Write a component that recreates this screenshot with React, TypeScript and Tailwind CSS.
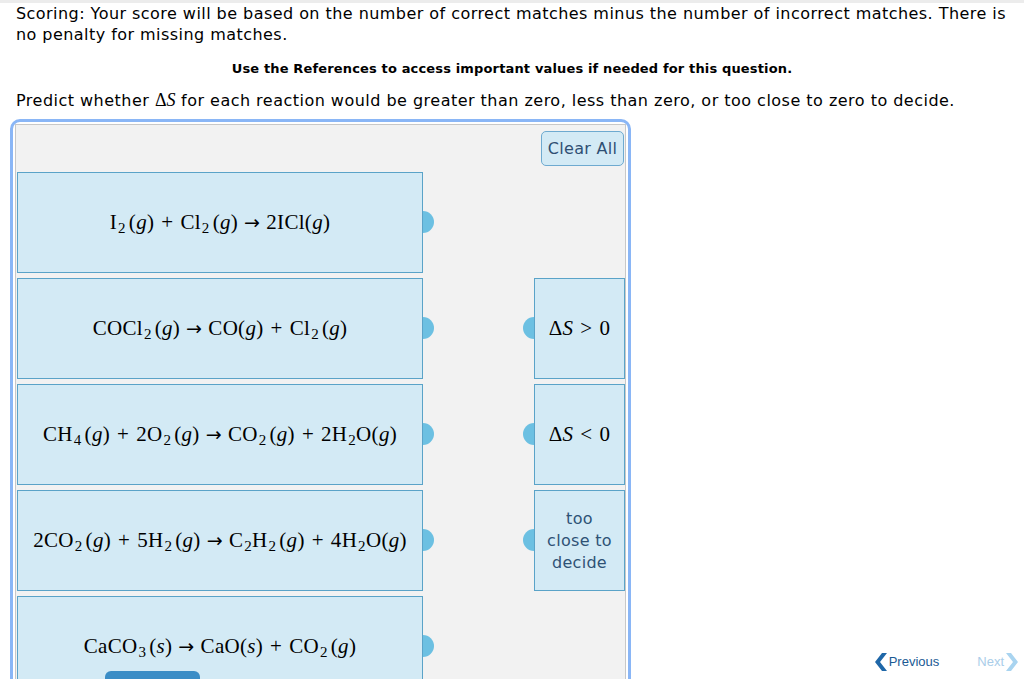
import type { ReactNode } from 'react';

const Sub = ({ c }: { c: string }) => <sub className="text-[15px] ml-[1px]">{c}</sub>;
const Ph = ({ c }: { c: string }) => (
  <span className="ml-[3px]">
    (<i>{c}</i>)
  </span>
);
const Plus = () => <span className="mx-[7px]">+</span>;
const Arr = () => <span className="mx-[6px] font-['DejaVu_Sans',sans-serif] text-[19px]">→</span>;

function Math({ children }: { children: ReactNode }) {
  return (
    <span className="font-['Liberation_Serif',serif] text-[21px] tracking-[0.3px] text-black whitespace-nowrap">
      {children}
    </span>
  );
}

const equations: ReactNode[] = [
  <>
    I<Sub c="2" />
    <Ph c="g" />
    <Plus />
    Cl<Sub c="2" />
    <Ph c="g" />
    <Arr />
    2ICl(<i>g</i>)
  </>,
  <>
    COCl<Sub c="2" />
    <Ph c="g" />
    <Arr />
    CO(<i>g</i>)
    <Plus />
    Cl<Sub c="2" />
    <Ph c="g" />
  </>,
  <>
    CH<Sub c="4" />
    <Ph c="g" />
    <Plus />
    2O<Sub c="2" />
    <Ph c="g" />
    <Arr />
    CO<Sub c="2" />
    <Ph c="g" />
    <Plus />
    2H<Sub c="2" />O(<i>g</i>)
  </>,
  <>
    2CO<Sub c="2" />
    <Ph c="g" />
    <Plus />
    5H<Sub c="2" />
    <Ph c="g" />
    <Arr />
    C<Sub c="2" />H<Sub c="2" />
    <Ph c="g" />
    <Plus />
    4H<Sub c="2" />O(<i>g</i>)
  </>,
  <>
    CaCO<Sub c="3" />
    <Ph c="s" />
    <Arr />
    CaO(<i>s</i>)
    <Plus />
    CO<Sub c="2" />
    <Ph c="g" />
  </>,
];

const answers: (ReactNode | null)[] = [
  null,
  <Math>
    Δ<i>S</i>
    <span className="mx-[7px]">&gt;</span>0
  </Math>,
  <Math>
    Δ<i>S</i>
    <span className="mx-[7px]">&lt;</span>0
  </Math>,
  <span className="font-['DejaVu_Sans',sans-serif] text-[16px] leading-[22px] tracking-[0.3px] text-[#2f5275] text-center">
    too
    <br />
    close to
    <br />
    decide
  </span>,
  null,
];

function Chevron({ dir, color }: { dir: 'left' | 'right'; color: string }) {
  return (
    <svg width="12" height="18" viewBox="0 0 12 18">
      <polygon
        points={dir === 'left' ? '12,0 5,9 12,18 7,18 0,9 7,0' : '0,0 7,9 0,18 5,18 12,9 5,0'}
        fill={color}
      />
    </svg>
  );
}

export default function App() {
  return (
    <div className="relative w-[1024px] h-[679px] overflow-hidden bg-white text-black font-['DejaVu_Sans',sans-serif]">
      <div className="h-[3px] bg-[#ececec]" />
      <div className="px-4">
        <p className="text-[16px] leading-[21px] tracking-[0.45px]">
          Scoring: Your score will be based on the number of correct matches minus the number of incorrect matches.
          There is no penalty for missing matches.
        </p>
        <p className="mt-[16px] text-center text-[13px] leading-[16px] font-bold tracking-[0.15px]">
          Use the References to access important values if needed for this question.
        </p>
        <p className="mt-[13px] text-[16px] leading-[21px] tracking-[0.48px]">
          Predict whether{' '}
          <span className="font-['Liberation_Serif',serif] text-[18px] tracking-normal">
            Δ<i>S</i>
          </span>{' '}
          for each reaction would be greater than zero, less than zero, or too close to zero to decide.
        </p>
      </div>

      <div className="flex mt-[8px]">
        <div className="ml-[10px] w-[621px] shrink-0 border-[3px] border-[#8ab6f6] rounded-[10px] p-[2px] bg-white">
          <div className="border border-[#c8c8c8] bg-[#f2f2f2] pb-6">
            <div className="flex justify-end pt-[6px] pr-[1px]">
              <button className="h-[35px] w-[83px] rounded-[5px] border border-[#6eaad0] bg-[#d3eaf5] text-[16px] tracking-[0.3px] text-[#2f4f73]">
                Clear All
              </button>
            </div>
            <div className="mt-[6px] flex flex-col gap-[5px] pl-[1px]">
              {equations.map((eq, i) => (
                <div key={i} className="flex justify-between">
                  <div className="relative w-[406px] h-[101px]">
                    <span className="absolute right-[-11px] top-[39px] h-[22px] w-[22px] rounded-full bg-[#6cc0e2]" />
                    <div className="relative flex h-full items-center justify-center border border-[#5aa3c8] bg-[#d3eaf5]">
                      <Math>{eq}</Math>
                    </div>
                  </div>
                  {answers[i] && (
                    <div className="relative w-[91px] h-[101px]">
                      <span className="absolute left-[-11px] top-[39px] h-[22px] w-[22px] rounded-full bg-[#6cc0e2]" />
                      <div className="relative flex h-full items-center justify-center border border-[#5aa3c8] bg-[#d3eaf5]">
                        {answers[i]}
                      </div>
                    </div>
                  )}
                </div>
              ))}
            </div>
          </div>
        </div>

        <div className="ml-auto pr-[6px] pt-[533px]">
          <div className="flex items-center gap-[38px] font-['Liberation_Sans',sans-serif] text-[13px]">
            <a className="flex items-center gap-[2px] text-[#1b5a94]">
              <Chevron dir="left" color="#1f67a8" />
              Previous
            </a>
            <a className="flex items-center gap-[2px] text-[#a9cde9]">
              Next
              <Chevron dir="right" color="#a9d4f0" />
            </a>
          </div>
        </div>
      </div>

      <button className="absolute left-[105px] top-[671px] h-[30px] w-[95px] rounded-[6px] bg-[#3a8dc6] pt-[4px] text-[13px] font-bold text-white">
        Show Hint
      </button>
    </div>
  );
}
